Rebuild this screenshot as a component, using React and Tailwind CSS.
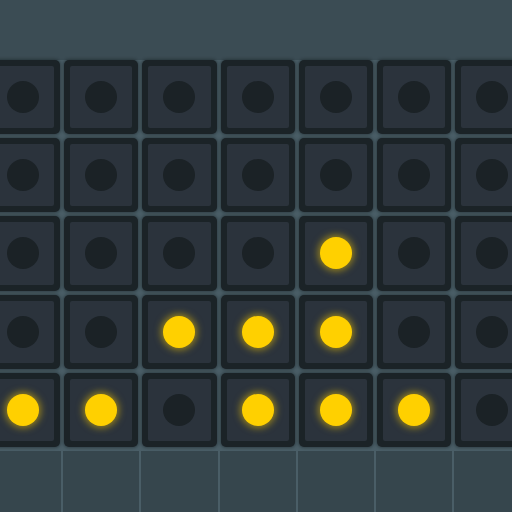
import React from "react";

const lit = [
  [],
  [],
  [4],
  [2, 3, 4],
  [0, 1, 3, 4, 5],
];

function Cell({ on }) {
  return (
    <div className="w-[74.2px] h-[74.2px] rounded-[5px] bg-[#1b2327] p-[6px] shadow-[0_0_3px_1px_rgba(20,28,32,0.45)]">
      <div className="w-full h-full rounded-[2px] bg-[#2b333c] flex items-center justify-center">
        {on ? (
          <div className="w-[32px] h-[32px] rounded-full bg-[#ffd000] shadow-[0_0_7px_2px_rgba(255,208,0,0.5)]" />
        ) : (
          <div className="w-[32px] h-[32px] rounded-full bg-[#1b2226]" />
        )}
      </div>
    </div>
  );
}

export default function App() {
  const cols = [0, 1, 2, 3, 4, 5, 6];
  return (
    <div className="w-[512px] h-[512px] overflow-hidden bg-[#3b4c54] flex flex-col">
      <div className="h-[60px] shrink-0 bg-[#3b4c54]" />
      <div className="bg-[#4a5e67] flex flex-col gap-[4px] -ml-[14px] w-[560px]">
        {lit.map((row, r) => (
          <div key={r} className="flex gap-[4px]">
            {cols.map((c) => (
              <Cell key={c} on={row.includes(c)} />
            ))}
          </div>
        ))}
        <div className="flex gap-[2px] h-[70px] pl-[0px]">
          <div className="w-[75.2px] bg-[#36464d]" />
          {cols.slice(1).map((c) => (
            <div key={c} className="w-[76.2px] bg-[#36464d]" />
          ))}
        </div>
      </div>
    </div>
  );
}
